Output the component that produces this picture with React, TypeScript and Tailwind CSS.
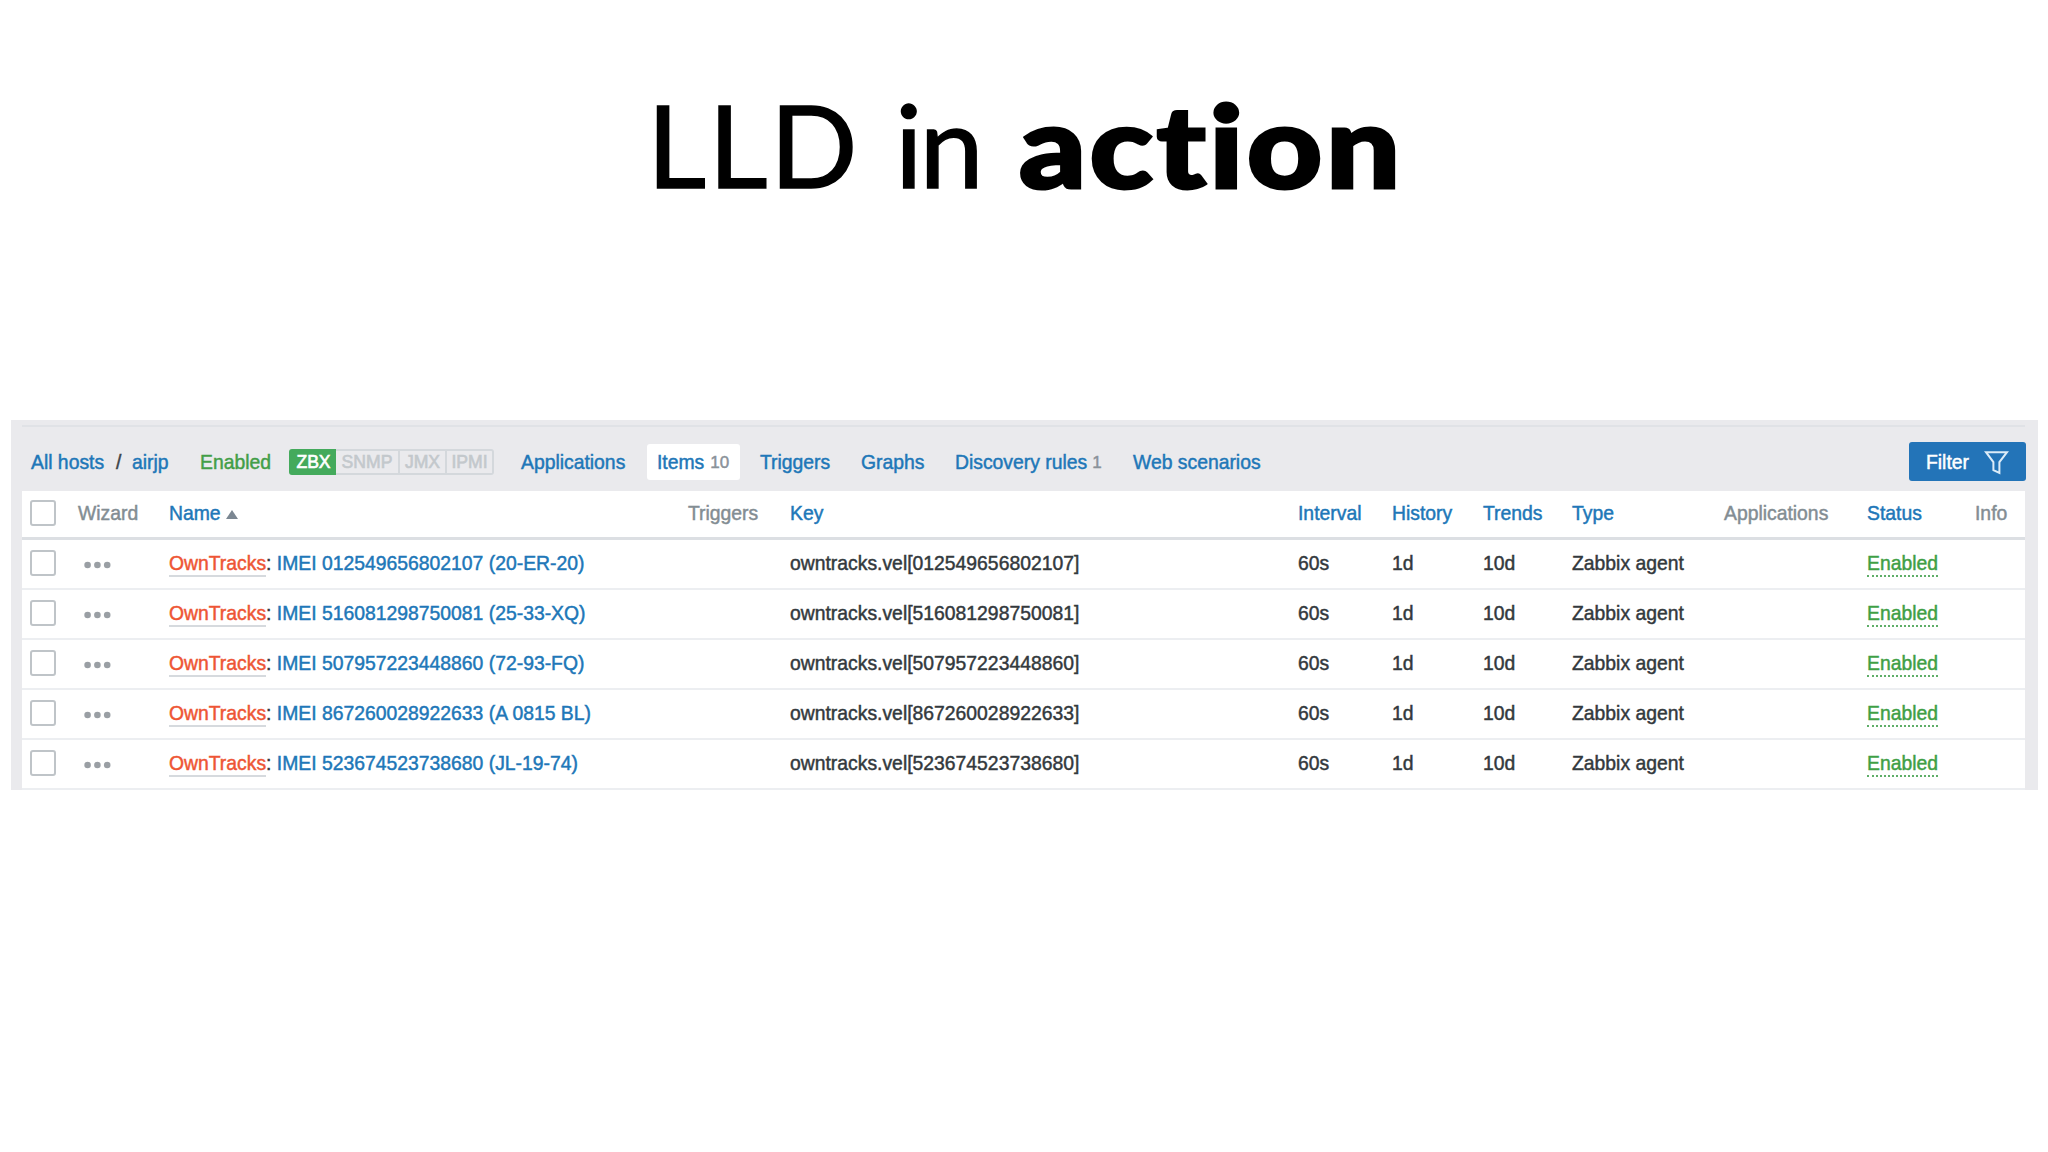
import React from 'react';

interface Item {
  imei: string;
  label: string;
}

const items: Item[] = [
  { imei: '012549656802107', label: '20-ER-20' },
  { imei: '516081298750081', label: '25-33-XQ' },
  { imei: '507957223448860', label: '72-93-FQ' },
  { imei: '867260028922633', label: 'A 0815 BL' },
  { imei: '523674523738680', label: 'JL-19-74' },
];

const columns =
  'grid grid-cols-[56px_91px_519px_102px_508px_94px_91px_89px_152px_143px_108px_1fr] items-center whitespace-nowrap';

const Checkbox = () => (
  <span className="ml-2 block h-[26px] w-[26px] rounded-[3px] border-2 border-[#bfc4c8] bg-white" />
);

const Dots = () => (
  <svg width="28" height="8" viewBox="0 0 28 8" className="ml-1.5 mt-1 fill-[#9a9fa4]">
    <circle cx="3.6" cy="4" r="3.3" />
    <circle cx="13.4" cy="4" r="3.3" />
    <circle cx="23.2" cy="4" r="3.3" />
  </svg>
);

const TopBar = () => (
  <div className="flex h-[64px] items-center whitespace-nowrap pl-[9px] pt-[5px] text-[#2077b8]">
    <a className="w-[85px]">All hosts</a>
    <span className="w-4 text-[#3c4348]">/</span>
    <a className="w-[68px]">airjp</a>
    <span className="w-[89px] text-[#429e47]">Enabled</span>
    <div className="mr-[27px] flex h-[26px] w-[205px] items-center text-[17.6px] text-[#c3c8cc] [-webkit-text-stroke:0.6px]">
      <span className="flex h-full w-[47px] items-center justify-center rounded-l-[3px] bg-[#44aa5c] pl-0.5 text-white">ZBX</span>
      <span className="flex h-full w-[64px] items-center justify-center border-2 border-l-0 border-[#d4d8dc]">SNMP</span>
      <span className="flex h-full w-[47px] items-center justify-center border-y-2 border-r-2 border-[#d4d8dc]">JMX</span>
      <span className="flex h-full w-[47px] items-center justify-center rounded-r-[3px] border-y-2 border-r-2 border-[#d4d8dc]">IPMI</span>
    </div>
    <a className="w-[126px]">Applications</a>
    <a className="mr-5 flex h-9 w-[93px] items-center rounded-[3px] bg-white pl-[10px]">
      Items
      <span className="ml-1.5 pt-0.5 text-[17px] text-[#8a9299]">10</span>
    </a>
    <a className="w-[101px]">Triggers</a>
    <a className="w-[94px]">Graphs</a>
    <a className="flex w-[178px] items-center">
      Discovery rules
      <span className="ml-[5px] pt-0.5 text-[17px] text-[#8a9299]">1</span>
    </a>
    <a>Web scenarios</a>
    <button className="ml-auto -mr-px flex h-[39px] w-[117px] items-center rounded-[3px] bg-[#2374b8] pl-[17px] text-white">
      Filter
      <svg width="25" height="26" viewBox="0 0 25 26" className="ml-[15px] mt-0.5 fill-none stroke-[#dcecf8] stroke-2">
        <path d="M2 2.2H23L15.4 12.2V23L9.4 20.2V12.2Z" />
      </svg>
    </button>
  </div>
);

const TableHead = () => (
  <div className={`${columns} h-[49px] border-b-3 border-[#dcdfe3] bg-white pb-[3px] text-[#2077b8]`}>
    <Checkbox />
    <span className="text-[#838d93]">Wizard</span>
    <span className="flex items-center">
      Name
      <svg width="12" height="9" viewBox="0 0 12 9" className="ml-[5px] mt-1 fill-[#7b8792]">
        <path d="M6 0L12 9H0Z" />
      </svg>
    </span>
    <span className="text-[#838d93]">Triggers</span>
    <span>Key</span>
    <span>Interval</span>
    <span>History</span>
    <span>Trends</span>
    <span>Type</span>
    <span className="text-[#838d93]">Applications</span>
    <span>Status</span>
    <span className="text-[#838d93]">Info</span>
  </div>
);

const ItemRow = ({ imei, label }: Item) => (
  <div className={`${columns} h-[50px] border-b-2 border-[#eceef1] bg-white pb-0.5 text-[#33393d]`}>
    <Checkbox />
    <Dots />
    <span>
      <a className="border-b-2 border-[#d6dade] pb-px text-[#ee5535]">OwnTracks</a>:{' '}
      <a className="text-[#2077b8]">IMEI {imei} ({label})</a>
    </span>
    <span />
    <span>owntracks.vel[{imei}]</span>
    <span>60s</span>
    <span>1d</span>
    <span>10d</span>
    <span>Zabbix agent</span>
    <span />
    <span>
      <a className="border-b-2 border-dotted border-[#5fae68] pb-px text-[#3f9f45]">Enabled</a>
    </span>
    <span />
  </div>
);

export default function App() {
  return (
    <div className="h-[1152px] w-[2048px] overflow-hidden bg-white">
      <h1 className="flex h-[420px] pl-[647px] pt-[73px] font-[Lato,sans-serif] text-[115px] leading-[140px] whitespace-nowrap text-black [font-variant-ligatures:none] [-webkit-text-stroke:1.5px]">
        <span className="w-[248px] tracking-[2.5px]">LLD</span>
        <span className="w-[124px] tracking-[-3px]">in</span>
        <span className="origin-left scale-x-[1.14] font-black tracking-[3px] [-webkit-text-stroke:3px]">action</span>
      </h1>
      <div className="ml-[11px] h-[370px] w-[2027px] bg-[#eaeaed] pl-[11px] pr-[13px] pt-[5px] font-['Liberation_Sans',Arial,sans-serif] text-[19.35px] leading-6 [-webkit-text-stroke:0.45px]">
        <div className="border-t-2 border-[#e0e2e6]">
          <TopBar />
          <TableHead />
          {items.map((item) => (
            <ItemRow key={item.imei} {...item} />
          ))}
        </div>
      </div>
    </div>
  );
}
